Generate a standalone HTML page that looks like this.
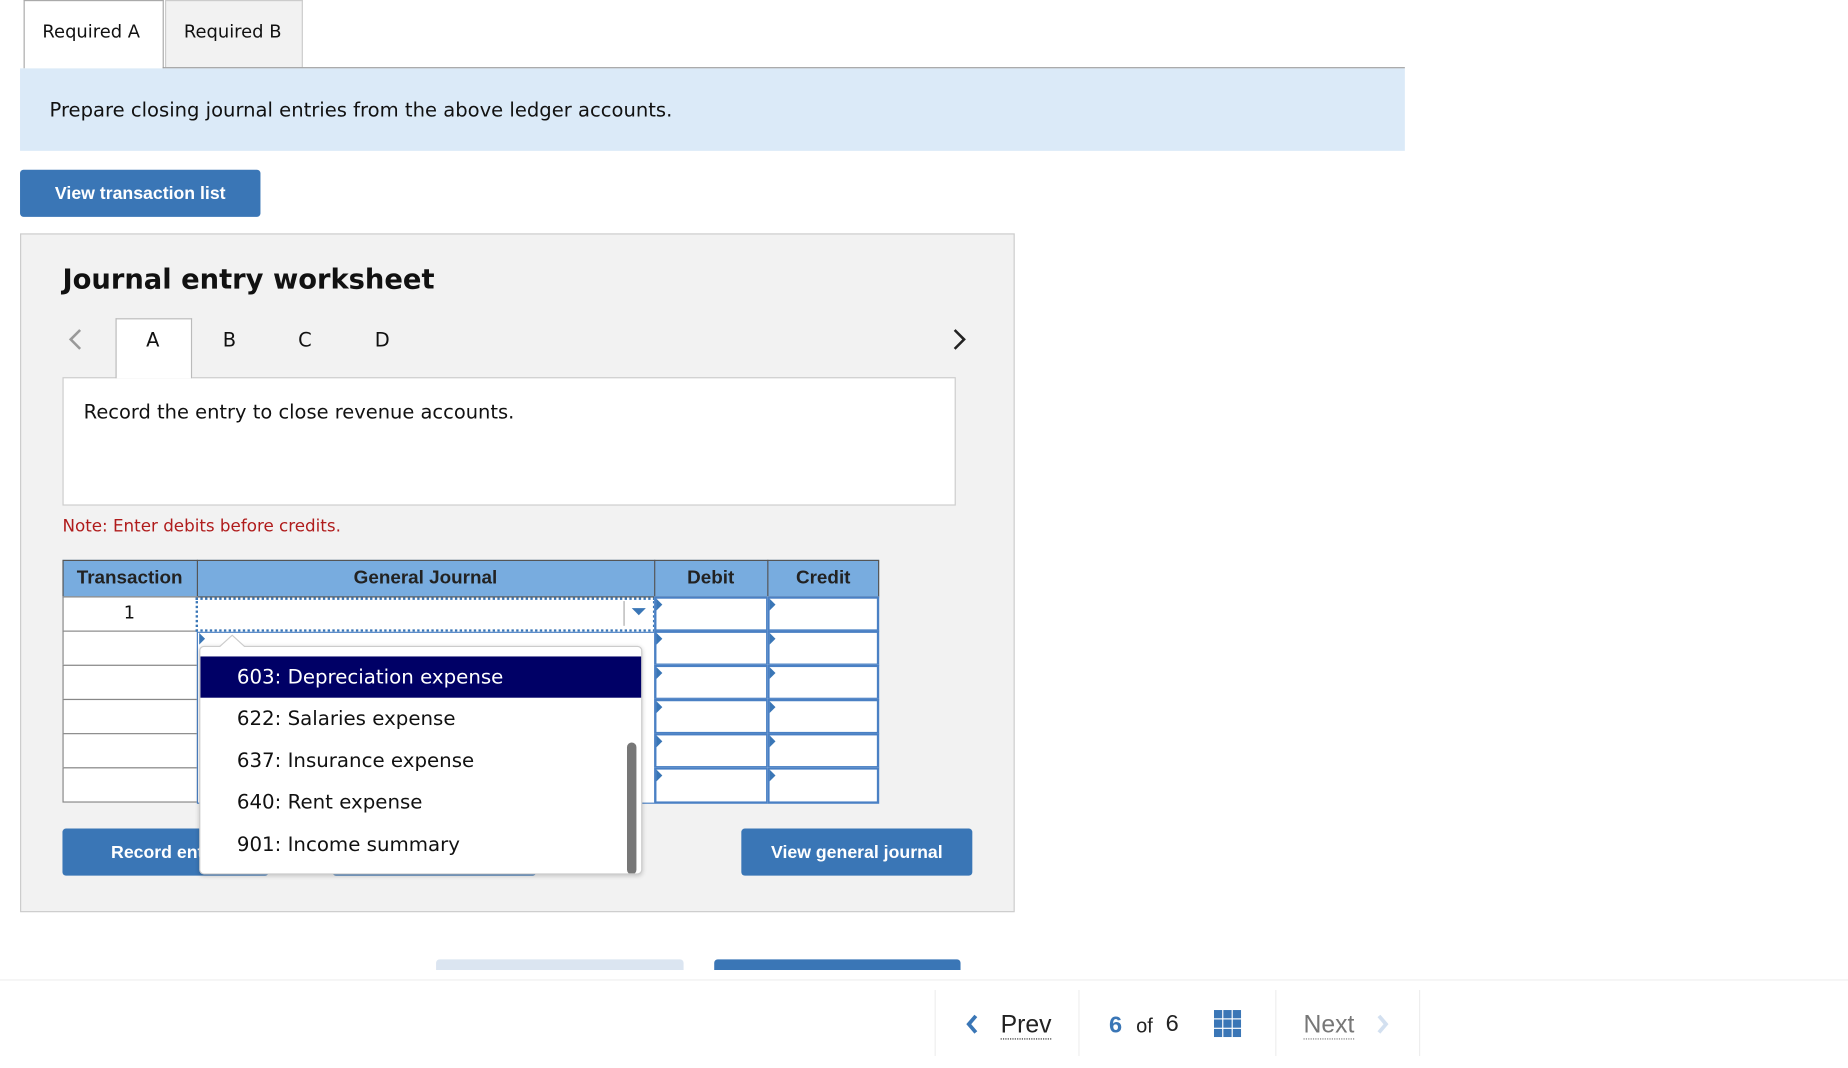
<!DOCTYPE html>
<html><head><meta charset="utf-8"><style>
html,body{margin:0;padding:0;background:#fff;overflow:hidden;width:1848px;height:1068px}
#w{position:absolute;left:0;top:0;width:1568px;height:906px;transform:scale(1.17857);transform-origin:0 0;font-family:"DejaVu Sans",Verdana,sans-serif;color:#111}
.a{position:absolute;box-sizing:border-box}
.btn{background:#3a76b6;color:#fff;font-family:"Liberation Sans",Arial,sans-serif;font-weight:bold;font-size:15px;border-radius:3px;display:flex;align-items:center;justify-content:center}
.cell{border:1px solid #888;background:#fff}
.bc{border:2px solid #4a80c4;background:#fff}
.tri{position:absolute;width:0;height:0;border-top:5px solid transparent;border-bottom:5px solid transparent;border-left:5px solid #3a76b6}
.it{position:absolute;left:31px;font-size:16.8px;height:35px;line-height:35px}
.th{position:absolute;top:482px;text-align:center;font-family:'Liberation Sans',Arial;font-weight:bold;font-size:16px;color:#222}
</style></head><body><div id="w">
<div class="a" style="left:20px;top:0;width:119px;height:58px;background:#fff;border:1px solid #aaa;border-bottom:none"></div>
<div class="a" style="left:140px;top:0;width:117px;height:57px;background:#f2f2f2;border:1px solid #ccc;border-bottom:none"></div>
<div class="a" style="left:36px;top:18px;font-size:15.2px">Required A</div>
<div class="a" style="left:156px;top:18px;font-size:15.2px">Required B</div>
<div class="a" style="left:138px;top:57px;width:1054px;height:1px;background:#999"></div>
<div class="a" style="left:17px;top:58px;width:1175px;height:70px;background:#dbeaf8"></div>
<div class="a" style="left:42px;top:84px;font-size:16.6px">Prepare closing journal entries from the above ledger accounts.</div>
<div class="a btn" style="left:17px;top:144px;width:204px;height:40px">View transaction list</div>
<div class="a" style="left:17px;top:198px;width:844px;height:576px;background:#f2f2f2;border:1px solid #ccc"></div>
<div class="a" style="left:53px;top:224px;font-size:23.2px;font-weight:bold">Journal entry worksheet</div>
<svg class="a" style="left:57px;top:278px" width="14" height="20"><path d="M11 2 L3 10 L11 18" stroke="#999" stroke-width="2.2" fill="none"/></svg>
<svg class="a" style="left:807px;top:278px" width="14" height="20"><path d="M3 2 L11 10 L3 18" stroke="#222" stroke-width="2.2" fill="none"/></svg>
<div class="a" style="left:53px;top:320px;width:758px;height:109px;background:#fff;border:1px solid #ccc"></div>
<div class="a" style="left:98px;top:270px;width:65px;height:51px;background:#fff;border:1px solid #bbb;border-bottom:none"></div>
<div class="a" style="left:124px;top:279px;font-size:16.5px">A</div>
<div class="a" style="left:189px;top:279px;font-size:16.5px">B</div>
<div class="a" style="left:253px;top:279px;font-size:16.5px">C</div>
<div class="a" style="left:318px;top:279px;font-size:16.5px">D</div>
<div class="a" style="left:71px;top:340px;font-size:16.5px">Record the entry to close revenue accounts.</div>
<div class="a" style="left:53px;top:439px;font-size:14.2px;color:#b01c1c">Note: Enter debits before credits.</div>
<div class="a" style="left:53px;top:475px;width:693px;height:32px;background:#78acdf;border:1px solid #555"></div>
<div class="a" style="left:167px;top:475px;width:1px;height:32px;background:#555"></div>
<div class="a" style="left:555px;top:475px;width:1px;height:32px;background:#555"></div>
<div class="a" style="left:651px;top:475px;width:1px;height:32px;background:#555"></div>
<div class="th" style="left:53px;width:114px">Transaction</div>
<div class="th" style="left:167px;width:388px">General Journal</div>
<div class="th" style="left:555px;width:96px">Debit</div>
<div class="th" style="left:651px;width:95px">Credit</div>
<div class="a cell" style="left:53px;top:506px;width:115px;height:30px"></div>
<div class="a cell" style="left:53px;top:535px;width:115px;height:30px"></div>
<div class="a cell" style="left:53px;top:564px;width:115px;height:30px"></div>
<div class="a cell" style="left:53px;top:593px;width:115px;height:30px"></div>
<div class="a cell" style="left:53px;top:622px;width:115px;height:30px"></div>
<div class="a cell" style="left:53px;top:651px;width:115px;height:30px"></div>
<div class="a" style="left:105px;top:511px;font-size:15px">1</div>
<div class="a" style="left:166px;top:507px;width:390px;height:29px;border:2px dotted #3a76b6;background:#fff"></div>
<div class="a" style="left:529px;top:510px;width:1px;height:21px;background:#aaa"></div>
<div class="a" style="left:536px;top:516px;width:0;height:0;border-left:6px solid transparent;border-right:6px solid transparent;border-top:6px solid #3a76b6"></div>
<div class="a" style="left:167px;top:536px;width:389px;height:146px;background:#fff;border:1px solid #4a80c4"></div>
<div class="a bc" style="left:555px;top:506px;width:97px;height:30px"></div>
<div class="a bc" style="left:651px;top:506px;width:95px;height:30px"></div>
<div class="a bc" style="left:555px;top:535px;width:97px;height:30px"></div>
<div class="a bc" style="left:651px;top:535px;width:95px;height:30px"></div>
<div class="a bc" style="left:555px;top:564px;width:97px;height:30px"></div>
<div class="a bc" style="left:651px;top:564px;width:95px;height:30px"></div>
<div class="a bc" style="left:555px;top:593px;width:97px;height:30px"></div>
<div class="a bc" style="left:651px;top:593px;width:95px;height:30px"></div>
<div class="a bc" style="left:555px;top:622px;width:97px;height:30px"></div>
<div class="a bc" style="left:651px;top:622px;width:95px;height:30px"></div>
<div class="a bc" style="left:555px;top:651px;width:97px;height:31px"></div>
<div class="a bc" style="left:651px;top:651px;width:95px;height:31px"></div>
<div class="tri" style="left:557px;top:508px"></div><div class="tri" style="left:653px;top:508px"></div>
<div class="tri" style="left:557px;top:537px"></div><div class="tri" style="left:653px;top:537px"></div>
<div class="tri" style="left:557px;top:566px"></div><div class="tri" style="left:653px;top:566px"></div>
<div class="tri" style="left:557px;top:595px"></div><div class="tri" style="left:653px;top:595px"></div>
<div class="tri" style="left:557px;top:624px"></div><div class="tri" style="left:653px;top:624px"></div>
<div class="tri" style="left:557px;top:653px"></div><div class="tri" style="left:653px;top:653px"></div>
<div class="tri" style="left:169px;top:537px"></div>
<div class="a btn" style="left:53px;top:703px;width:175px;height:40px">Record entry</div>
<div class="a btn" style="left:282px;top:703px;width:173px;height:40px">Clear entry</div>
<div class="a btn" style="left:629px;top:703px;width:196px;height:40px">View general journal</div>
<div class="a" style="left:169px;top:548px;width:376px;height:194px;background:#fff;border:1px solid #ccc;border-radius:4px;box-shadow:0 1px 4px rgba(0,0,0,.2);overflow:hidden">
<div class="a" style="left:0;top:8px;width:375px;height:35px;background:#000066"></div>
<div class="it" style="top:8px;color:#fff">603: Depreciation expense</div>
<div class="it" style="top:43px">622: Salaries expense</div>
<div class="it" style="top:79px">637: Insurance expense</div>
<div class="it" style="top:114px">640: Rent expense</div>
<div class="it" style="top:150px">901: Income summary</div>
<div class="a" style="left:362px;top:81px;width:8px;height:112px;background:#777;border-radius:4px"></div>
</div>
<svg class="a" style="left:186px;top:538px" width="24" height="11"><path d="M0 11 L11 1 L22 11" fill="#fff" stroke="#ccc"/></svg>
<div class="a" style="left:370px;top:814px;width:210px;height:9px;background:#dbe5f1;border-radius:3px 3px 0 0"></div>
<div class="a" style="left:606px;top:814px;width:209px;height:9px;background:#3a76b6;border-radius:3px 3px 0 0"></div>
<div class="a" style="left:0;top:831px;width:1568px;height:1px;background:#eee"></div>
<div class="a" style="left:793px;top:840px;width:1px;height:56px;background:#eee"></div>
<div class="a" style="left:915px;top:840px;width:1px;height:56px;background:#eee"></div>
<div class="a" style="left:1082px;top:840px;width:1px;height:56px;background:#eee"></div>
<div class="a" style="left:1204px;top:840px;width:1px;height:56px;background:#eee"></div>
<svg class="a" style="left:818px;top:860px" width="14" height="18"><path d="M10 2 L4 9 L10 16" stroke="#3a76b6" stroke-width="3.2" fill="none"/></svg>
<div class="a" style="left:849px;top:859px;font-family:'Liberation Sans',Arial;font-size:21px;color:#222;border-bottom:1.5px dotted #222;line-height:22px">Prev</div>
<div class="a" style="left:941px;top:859px;font-family:'Liberation Sans',Arial;font-size:20px;color:#3a76b6;font-weight:bold">6</div>
<div class="a" style="left:964px;top:861px;font-family:'Liberation Sans',Arial;font-size:17px;color:#222">of</div>
<div class="a" style="left:989px;top:858px;font-family:'Liberation Sans',Arial;font-size:20px;color:#222">6</div>
<svg class="a" style="left:1030px;top:857px" width="24" height="23"><g fill="#3a76b6"><rect x="0" y="0" width="7" height="7"/><rect x="8" y="0" width="7" height="7"/><rect x="16" y="0" width="7" height="7"/><rect x="0" y="8" width="7" height="7"/><rect x="8" y="8" width="7" height="7"/><rect x="16" y="8" width="7" height="7"/><rect x="0" y="16" width="7" height="7"/><rect x="8" y="16" width="7" height="7"/><rect x="16" y="16" width="7" height="7"/></g></svg>
<div class="a" style="left:1106px;top:859px;font-family:'Liberation Sans',Arial;font-size:21px;color:#777;border-bottom:1.5px dotted #777;line-height:22px">Next</div>
<svg class="a" style="left:1166px;top:860px" width="14" height="18"><path d="M4 2 L10 9 L4 16" stroke="#d3e0f0" stroke-width="3.2" fill="none"/></svg>
</div></body></html>
